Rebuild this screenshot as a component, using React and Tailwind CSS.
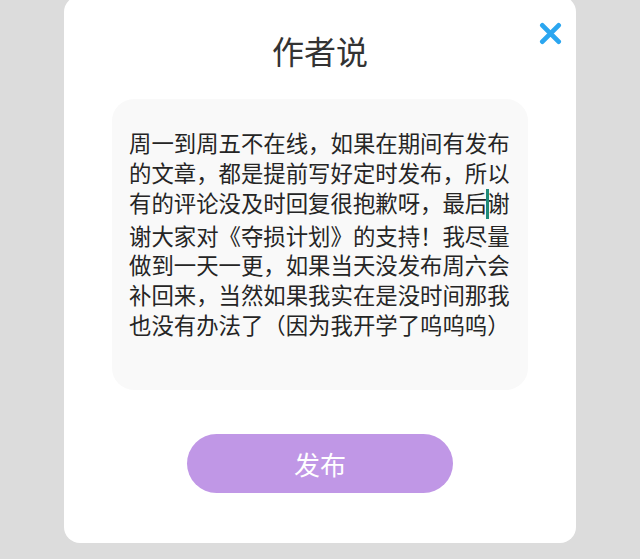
import React from 'react';

const lines = [
  '周一到周五不在线，如果在期间有发布',
  '的文章，都是提前写好定时发布，所以',
  null,
  '谢大家对《夺损计划》的支持！我尽量',
  '做到一天一更，如果当天没发布周六会',
  '补回来，当然如果我实在是没时间那我',
  '也没有办法了（因为我开学了呜呜呜）',
];

export default function App() {
  return (
    <div
      className="h-[559px] w-full bg-[#dcdcdc] flex justify-center overflow-hidden"
      style={{ fontFamily: '"Noto Sans CJK SC", "Noto Sans", sans-serif' }}
    >
      <div className="relative mt-[-4px] w-[512px] h-[547px] bg-white rounded-2xl flex flex-col items-center">
        {/* Close */}
        <button className="absolute top-[26px] right-[14px] w-[23px] h-[23px]">
          <svg viewBox="0 0 24 24" className="w-[23px] h-[23px]">
            <path d="M3.5 3.5 L20.5 20.5 M20.5 3.5 L3.5 20.5" stroke="#2ba6f0" strokeWidth="5" strokeLinecap="round" fill="none" />
          </svg>
        </button>

        {/* Header */}
        <h1 className="mt-[34px] h-[40px] leading-[40px] text-[32px] text-[#333333] font-normal">作者说</h1>

        {/* Text area */}
        <div className="mt-[29px] w-[416px] h-[291px] bg-[#f9f9f9] rounded-[22px] pt-[29px] pl-[17px]">
          <div className="text-[22.4px] leading-[29.8px] text-[#252525] whitespace-nowrap">
            {lines.map((line, i) =>
              line === null ? (
                <div key={i}>
                  有的评论没及时回复很抱歉呀，最后
                  <span className="inline-block align-middle w-[3px] h-[30px] bg-[#1f8a78] -mx-[1.5px] relative top-[-2px]" />
                  谢
                </div>
              ) : (
                <div key={i}>{line}</div>
              )
            )}
          </div>
        </div>

        {/* Publish button */}
        <button className="mt-[44px] w-[266px] h-[59px] rounded-full bg-[#c097e6] text-white text-[26px] leading-[59px]">
          发布
        </button>
      </div>
    </div>
  );
}
